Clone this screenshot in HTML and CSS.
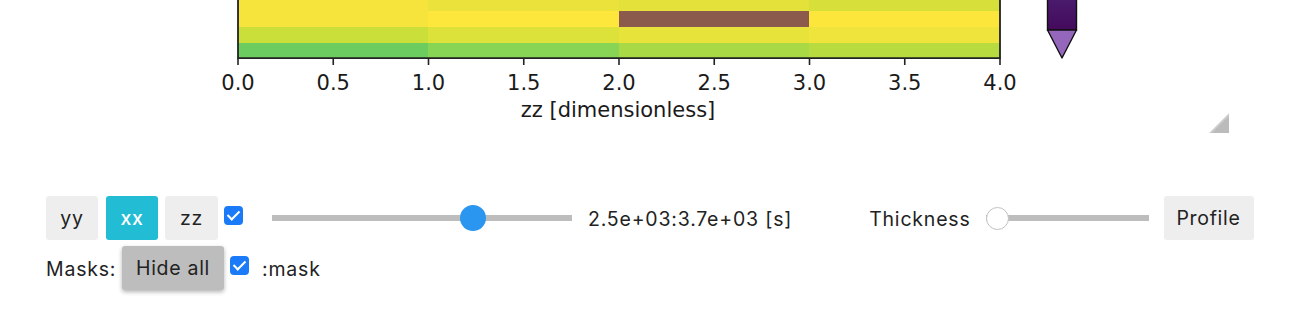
FILE: index.html
```html
<!DOCTYPE html>
<html>
<head>
<meta charset="utf-8">
<link rel="stylesheet" href="styles.css">
</head>
<body>
<div class="figure">
  <svg class="plot" width="1292" height="140" viewBox="0 0 1292 140">
    <defs>
      <linearGradient id="cbar" x1="0" y1="0" x2="0" y2="1">
        <stop offset="0" stop-color="#4a1c6e"/>
        <stop offset="1" stop-color="#440a5c"/>
      </linearGradient>
      <linearGradient id="grip" x1="0" y1="0" x2="1" y2="1">
        <stop offset="0.35" stop-color="#bbbbbb" stop-opacity="0"/>
        <stop offset="0.6" stop-color="#bbbbbb" stop-opacity="1"/>
      </linearGradient>
    </defs>
    <g shape-rendering="crispEdges">
      <!-- heatmap cells: column 1 -->
      <rect x="238" y="-5" width="191" height="16" fill="#f6e43d"/>
      <rect x="238" y="11" width="191" height="16" fill="#f6e43d"/>
      <rect x="238" y="27" width="191" height="16" fill="#cadf3a"/>
      <rect x="238" y="43" width="191" height="15" fill="#6dcc60"/>
      <!-- column 2 -->
      <rect x="428" y="-5" width="191" height="16" fill="#ebe33b"/>
      <rect x="428" y="11" width="191" height="16" fill="#fde73d"/>
      <rect x="428" y="27" width="191" height="16" fill="#dde23a"/>
      <rect x="428" y="43" width="191" height="15" fill="#88d556"/>
      <!-- column 3 -->
      <rect x="619" y="-5" width="191" height="16" fill="#e4e23a"/>
      <rect x="619" y="11" width="190" height="16" fill="#8c5a4d"/>
      <rect x="619" y="27" width="191" height="16" fill="#e7e33a"/>
      <rect x="619" y="43" width="191" height="15" fill="#aad946"/>
      <!-- column 4 -->
      <rect x="809" y="-5" width="191" height="16" fill="#d7e03b"/>
      <rect x="809" y="11" width="191" height="16" fill="#fde63c"/>
      <rect x="809" y="27" width="191" height="16" fill="#efe43b"/>
      <rect x="809" y="43" width="191" height="15" fill="#b8dc40"/>
    </g>
    <!-- spines -->
    <path d="M238 -2 V58.2 H1000 V-2" fill="none" stroke="#222" stroke-width="1.8"/>
    <!-- ticks -->
    <g stroke="#222" stroke-width="1.6">
      <line x1="238" y1="58" x2="238" y2="65"/>
      <line x1="428.5" y1="58" x2="428.5" y2="65"/>
      <line x1="619" y1="58" x2="619" y2="65"/>
      <line x1="809.5" y1="58" x2="809.5" y2="65"/>
      <line x1="1000" y1="58" x2="1000" y2="65"/>
      <line x1="333.25" y1="58" x2="333.25" y2="65"/>
      <line x1="523.75" y1="58" x2="523.75" y2="65"/>
      <line x1="714.25" y1="58" x2="714.25" y2="65"/>
      <line x1="904.75" y1="58" x2="904.75" y2="65"/>
    </g>
    <g class="tick-text" text-anchor="middle">
      <text x="238" y="90">0.0</text>
      <text x="333.25" y="90">0.5</text>
      <text x="428.5" y="90">1.0</text>
      <text x="523.75" y="90">1.5</text>
      <text x="619" y="90">2.0</text>
      <text x="714.25" y="90">2.5</text>
      <text x="809.5" y="90">3.0</text>
      <text x="904.75" y="90">3.5</text>
      <text x="1000" y="90">4.0</text>
    </g>
    <text class="axis-label" x="618" y="117" text-anchor="middle">zz [dimensionless]</text>
    <!-- colorbar -->
    <rect x="1047.5" y="-3" width="29" height="33" fill="url(#cbar)" stroke="#111" stroke-width="1.4"/>
    <polygon points="1047.5,30 1076.5,30 1062,58" fill="#9467bd" stroke="#111" stroke-width="1.4" stroke-linejoin="round"/>
    <!-- resize grip -->
    <polygon points="1229,113 1229,133 1209,133" fill="url(#grip)"/>
  </svg>
</div>
<div class="controls">
  <div class="row row-main">
    <button class="btn btn-yy">yy</button>
    <button class="btn btn-xx active">xx</button>
    <button class="btn btn-zz">zz</button>
    <input type="checkbox" class="check check-main" checked>
    <input type="range" class="slider slider-time" min="0" max="1000" value="686">
    <span class="label range-label">2.5e+03:3.7e+03 [s]</span>
    <span class="label thickness-label">Thickness</span>
    <input type="range" class="slider slider-thick" min="0" max="100" value="0">
    <button class="btn btn-profile">Profile</button>
  </div>
  <div class="row row-masks">
    <span class="label masks-label">Masks:</span>
    <button class="btn btn-hide pressed">Hide all</button>
    <input type="checkbox" class="check check-mask" checked>
    <span class="label mask-label">:mask</span>
  </div>
</div>
</body>
</html>
```

FILE: styles.css
```css
html, body {
  margin: 0;
  padding: 0;
  background: #ffffff;
}

body {
  width: 1292px;
  height: 312px;
  overflow: hidden;
  font-family: Inter, "Liberation Sans", sans-serif;
  color: #222222;
}

.figure {
  height: 140px;
}

.plot {
  display: block;
}

.tick-text text,
.axis-label {
  font-family: "DejaVu Sans", sans-serif;
  font-size: 21px;
  fill: #1a1a1a;
}

.controls {
  padding: 56px 0 0 46px;
  display: flex;
  flex-direction: column;
  gap: 6px;
}

.row {
  display: flex;
  align-items: center;
  height: 44px;
}

.label {
  font-size: 19.5px;
  line-height: 24px;
  letter-spacing: 0.8px;
  white-space: nowrap;
  padding-top: 1px;
}

.btn {
  height: 44px;
  padding: 0;
  border: none;
  border-radius: 3px;
  background: #eeeeee;
  font-family: Inter, "Liberation Sans", sans-serif;
  font-size: 19.5px;
  letter-spacing: 0.7px;
  color: #222222;
  margin: 0;
  cursor: pointer;
}

.btn-yy { width: 52px; }
.btn-xx { width: 52px; margin-left: 8px; }
.btn-zz { width: 53px; margin-left: 7px; }
.btn-profile { width: 90px; margin-left: 15px; }
.btn-hide { width: 102px; margin-left: 7px; }

.btn.active {
  background: #22bcd4;
  color: #ffffff;
  font-weight: 500;
}

.btn.pressed {
  background: #bdbdbd;
  box-shadow: 0 2px 4px rgba(0, 0, 0, 0.3);
}

.check {
  -webkit-appearance: none;
  appearance: none;
  width: 19px;
  height: 19px;
  margin: 0;
  border-radius: 4px;
  background: #1a7af8;
  position: relative;
  flex: none;
}

.check::after {
  content: "";
  position: absolute;
  left: 6px;
  top: 2px;
  width: 5px;
  height: 10px;
  border: solid #ffffff;
  border-width: 0 2.6px 2.6px 0;
  transform: rotate(45deg);
}

.check-main {
  margin-left: 6px;
  margin-bottom: 5px;
}

.check-mask {
  margin-left: 6px;
  margin-bottom: 5px;
}

.slider {
  -webkit-appearance: none;
  appearance: none;
  background: transparent;
  height: 26px;
  margin: 0;
  padding: 0;
  flex: none;
}

.slider::-webkit-slider-runnable-track {
  height: 6px;
  background: #bdbdbd;
  border: none;
}

.slider::-webkit-slider-thumb {
  -webkit-appearance: none;
  appearance: none;
  border: none;
}

.slider-time {
  width: 300px;
  margin-left: 29px;
}

.slider-time::-webkit-slider-thumb {
  width: 26px;
  height: 26px;
  border-radius: 50%;
  background: #2b96f0;
  margin-top: -10px;
}

.slider-thick {
  width: 163px;
  margin-left: 15px;
}

.slider-thick::-webkit-slider-thumb {
  box-sizing: border-box;
  width: 23px;
  height: 23px;
  border-radius: 50%;
  background: #ffffff;
  border: 1.6px solid #c2c2c2;
  margin-top: -8.5px;
}

.range-label {
  margin-left: 16px;
}

.thickness-label {
  margin-left: 77px;
}

.masks-label {
  width: 69px;
}

.mask-label {
  margin-left: 13px;
}
```
